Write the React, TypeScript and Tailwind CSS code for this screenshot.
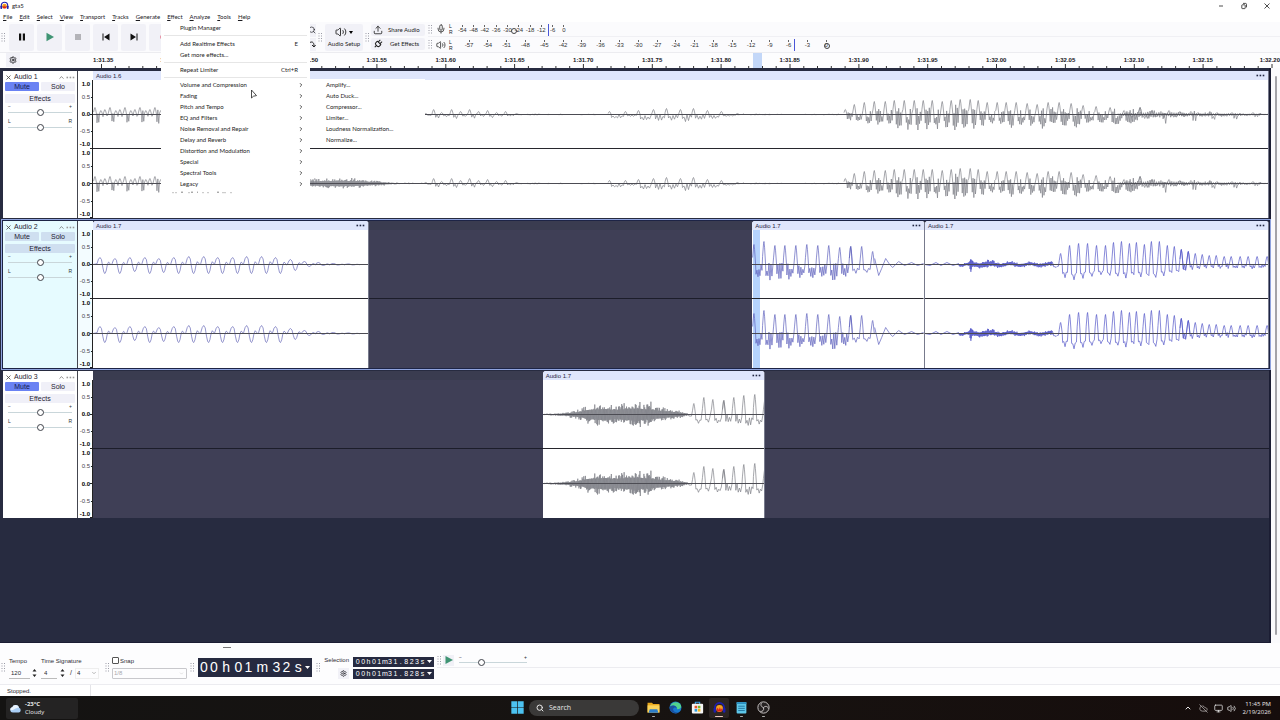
import React from "react";
import { ChevronDown, ChevronRight, ChevronUp, CloudOff, Mic, Monitor, Plug, Search, Settings, Upload, Volume2 } from "lucide-react";

type Point = [number, number];
type Pulse = [number, number, number];

function makeRandom(seed: number) {
  let s = seed;
  return () => {
    s = (s * 16807) % 2147483647;
    return s / 2147483647;
  };
}

/** A train of sharp peaks with a rough trough between each pair. */
function pulseTrain(pulses: Pulse[], rough: number, seed: number, step = 1.1): Point[] {
  const rnd = makeRandom(seed);
  const out: Point[] = [];
  pulses.forEach(([x, up, down], i) => {
    const next = pulses[i + 1];
    out.push([x - 1.4, up * 0.35], [x - 0.4, up * 0.92], [x, up], [x + 0.6, up * 0.75], [x + 1.6, 0]);
    if (!next) return;
    const start = x + 2;
    const end = next[0] - 1.8;
    let low = true;
    for (let p = start; p < end; p += step) {
      const t = (p - start) / (end - start);
      const base = -down * Math.pow(Math.sin(Math.PI * Math.min(0.93, t * 0.75 + 0.18)), 0.6);
      out.push([p, low ? base * (1.1 - 0.5 * rough * rnd()) : base * (1 - rough * (0.7 + 1.1 * rnd()))]);
      low = !low;
    }
  });
  return out;
}

/** Dense noise that follows an amplitude envelope, with a slow sway of its centre. */
function noise(envelope: Point[], seed: number, step = 0.5, sway = 0): Point[] {
  const rnd = makeRandom(seed);
  const out: Point[] = [];
  let flip = 1;
  for (let k = 0; k < envelope.length - 1; k++) {
    const [x0, a0] = envelope[k];
    const [x1, a1] = envelope[k + 1];
    for (let x = x0; x < x1; x += step) {
      const a = a0 + ((a1 - a0) * (x - x0)) / (x1 - x0);
      const r = rnd();
      out.push([x, flip * a * (0.5 + 0.6 * r * r * r) + sway * Math.sin(x / 3.2)]);
      flip = -flip;
    }
  }
  return out;
}

/** Soft rounded cycles: crest, trough and a small second bump. */
function softCycles(peaks: Pulse[]): Point[] {
  const out: Point[] = [];
  for (const [x, up, down] of peaks) {
    out.push([x - 3, up * 0.1], [x - 1.5, up * 0.75], [x, up], [x + 1.5, up * 0.7], [x + 2.8, -down * 0.3], [x + 4, -down * 0.9]);
    out.push([x + 5, -down], [x + 6.2, -down * 0.7], [x + 7.4, 0], [x + 8.6, up * 0.35], [x + 10, up * 0.15], [x + 11, -0.4]);
  }
  return out;
}

function toPath(points: Point[]) {
  return points.map(([x, y], i) => `${i ? "L" : "M"}${x.toFixed(1)} ${(-y).toFixed(1)}`).join("");
}

const introPulses: Pulse[] = [];
for (let i = 0; i < 15; i++) introPulses.push([2 + i * 15, 7, 11], [8 + i * 15, 4, 3], [12 + i * 15, 5, 3]);

const waveOne = [
  toPath(pulseTrain(introPulses, 0.9, 11, 0.9)),
  toPath(noise([[215, 4], [240, 5], [262, 5], [280, 3], [300, 1], [332, 0.6]], 5)),
  toPath(pulseTrain([[333, 1, 1], [341, 5, 4], [349, 2, 2], [359, 5, 4], [368, 3, 2], [377, 5, 4], [386, 3, 2], [395, 4, 3], [404, 2, 2], [413, 3, 2], [424, 1, 1]], 0.7, 8, 1.4)),
  toPath(noise([[424, 0.9], [450, 0.6], [514, 0.6]], 3)),
  toPath(pulseTrain([[517, 3, 4], [533, 3, 2], [546, 4, 6], [561, 5, 7], [574, 6, 6], [588, 5, 7], [601, 6, 6], [615, 4, 4], [629, 3, 2], [645, 1, 1]], 0.6, 9, 1.5)),
  toPath(noise([[645, 0.8], [700, 0.5], [751, 0.7]], 6)),
  toPath(
    pulseTrain(
      [
        [753, 5, 6], [762, 10, 8], [772, 12, 9], [782, 13, 10], [793, 13, 13], [802, 14, 14], [812, 14, 15], [822, 14, 15],
        [831, 14, 16], [840, 14, 14], [850, 13, 14], [859, 14, 16], [868, 15, 15], [878, 15, 13], [886, 14, 11], [895, 12, 10],
        [905, 12, 12], [914, 12, 13], [924, 12, 11], [935, 11, 12], [945, 10, 13], [956, 12, 12], [967, 12, 12], [979, 11, 12],
        [991, 9, 9], [1004, 8, 8], [1018, 7, 10], [1032, 4, 10], [1048, 7, 5],
      ],
      0.9,
      21,
      0.8,
    ),
  ),
  toPath(noise([[1026, 2], [1048, 3], [1060, 4], [1072, 3], [1092, 3], [1100, 2], [1118, 2], [1130, 1.5], [1150, 1.2], [1176, 1]], 57, 1.1)),
  toPath(pulseTrain([[1048, 7, 4], [1060, 4, 3], [1069, 3, 9], [1077, 4, 3], [1088, 3, 2], [1099, 3, 8], [1106, 2, 2], [1118, 3, 6], [1125, 2, 2], [1140, 2, 5], [1148, 1, 1], [1161, 2, 4], [1168, 1, 1]], 0.8, 77, 1.3)),
];

const waveTwoA = [
  toPath([
    [0, 0] as Point,
    ...softCycles([
      [7, 7, 9], [22, 6, 9], [37, 7, 7], [52, 7, 9], [66, 6, 8], [81, 7, 9], [96, 8, 9], [111, 8, 9], [125, 7, 9], [140, 7, 9],
      [154, 8, 9], [169, 8, 9], [183, 7, 9], [198, 5, 6], [212, 3, 2], [226, 2, 1], [241, 1, 0.5], [256, 0.6, 0.4],
    ]),
  ]),
];

const waveTwoB = [
  toPath(pulseTrain([[2, 20, 13], [12, 23, 15], [23, 19, 14], [33, 19, 15], [44, 19, 13], [55, 20, 14], [66, 19, 13], [77, 19, 15], [88, 17, 12], [99, 18, 8]], 0.65, 31, 1)),
  toPath(pulseTrain([[99, 18, 8], [110, 18, 8], [121, 13, 9]], 0.3, 4, 1.6)),
  toPath([[123, 6], [127, -11], [130, -4], [134, 6], [138, 0], [141, -3], [147, 3], [153, -1], [160, 2], [166, -1], [172, 1]]),
];

const waveTwoC = [
  toPath([[0, 0], [5, -1], [11, 2], [16, -1], [22, 2], [28, -1], [34, 1]]),
  toPath(noise([[34, 1.5], [44, 2], [46, 8], [48, 3], [60, 4], [75, 2.6], [95, 2.4], [110, 2], [128, 2.6]], 17, 0.4, 0.9)),
  toPath(
    pulseTrain(
      [[127, 3, 3], [136, 11, 13], [145, 19, 14], [154, 21, 13], [163, 21, 11], [172, 19, 10], [181, 19, 11], [189, 22, 12], [197, 23, 13], [205, 21, 12], [212, 22, 12], [220, 20, 13], [227, 23, 13], [235, 23, 11], [243, 19, 9], [250, 18, 8], [257, 15, 7], [264, 13, 6]],
      0.2,
      41,
      1.2,
    ),
  ),
  toPath(
    pulseTrain(
      [[257, 15, 6], [264, 13, 5], [271, 11, 5], [278, 10, 4], [285, 9, 4], [292, 9, 4], [300, 8, 4], [307, 8, 4], [316, 8, 4], [324, 8, 4], [333, 8, 4], [343, 8, 4]],
      0.7,
      43,
      1,
    ),
  ),
];

const waveThree = [
  toPath(noise([[0, 0.5], [20, 1.5], [38, 5], [45, 9], [62, 11], [72, 9], [84, 11], [95, 12], [104, 10], [106, 17], [109, 9], [120, 7], [135, 4], [145, 1]], 13, 0.4)),
  toPath(pulseTrain([[144, 1, 2], [151, 11, 8], [161, 17, 8], [170, 15, 8], [181, 14, 9]], 0.3, 23, 1.3)),
  toPath(pulseTrain([[181, 14, 9], [191, 17, 10], [201, 19, 12], [212, 20, 12], [222, 14, 8]], 0.65, 29, 1.2)),
];

function Waveform({ width, paths, stroke, selection }: { width: number; paths: string[]; stroke: string; selection?: boolean }) {
  return (
    <svg viewBox={`0 0 ${width} 138`} preserveAspectRatio="none" className="block h-[138px] w-full" aria-hidden="true">
      {selection && <rect x="1" y="0" width="7" height="138" fill="#b5d3fd" />}
      {[34.5, 103.5].map((cy) => (
        <g key={cy} transform={`translate(0 ${cy})`}>
          {paths.map((d, i) => (
            <path key={i} d={d} fill="none" stroke={stroke} strokeWidth="0.7" strokeLinejoin="round" vectorEffect="non-scaling-stroke" />
          ))}
          <path d={`M0 0H${width}`} stroke="#4b4b52" strokeWidth="1" />
        </g>
      ))}
      <path d={`M0 68.5H${width}`} stroke="#26262c" strokeWidth="1" />
    </svg>
  );
}

function Dots({ className }: { className: string }) {
  return (
    <svg viewBox="0 0 9 3" className={`h-[3px] w-[9px] ${className}`} fill="currentColor" aria-hidden="true">
      <rect x="0.5" y="0.7" width="1.6" height="1.6" />
      <rect x="3.6" y="0.7" width="1.6" height="1.6" />
      <rect x="6.7" y="0.7" width="1.6" height="1.6" />
    </svg>
  );
}

function Clip({ name, width, grow, paths, stroke, selection, square }: { name: string; width: number; grow: string; paths: string[]; stroke: string; selection?: boolean; square?: boolean }) {
  return (
    <section className={`${grow} flex min-w-0 basis-0 flex-col overflow-hidden border-r border-[#777a8c] bg-white ${square ? "" : "rounded-t-[3px]"}`}>
      <div className="flex h-[9px] shrink-0 items-center justify-between bg-[#dfe6fc] px-[3px] text-[6px] leading-[8px] text-[#1f2440]">
        <span className="whitespace-nowrap">{name}</span>
        <Dots className="text-[#1f2440]" />
      </div>
      <Waveform width={width} paths={paths} stroke={stroke} selection={selection} />
    </section>
  );
}

function Gap({ grow }: { grow: string }) {
  return (
    <div className={`${grow} flex basis-0 flex-col bg-[#3f3f56]`}>
      <div className="h-[9px] bg-[#3a3c50]" />
      <div className="h-[69px] border-b border-[#1c1d2a]" />
    </div>
  );
}

function ScaleChannel({ tall }: { tall?: boolean }) {
  return (
    <div className={`flex flex-col items-end text-[6px] leading-[8px] ${tall ? "h-[69px]" : "h-[68px]"}`}>
      <b>1.0</b>
      <div className="grow-[5]" />
      <span className="text-[#44444c]">0.5</span>
      <div className="grow-[9]" />
      <b>0.0</b>
      <div className="grow-[9]" />
      <span className="text-[#44444c]">-0.5</span>
      <div className="grow-[5]" />
      <b>-1.0</b>
    </div>
  );
}

function ScaleTicks() {
  return (
    <svg viewBox="0 0 3 138" className="mt-[9px] h-[138px] w-[3px] shrink-0 text-[#222]" fill="none" stroke="currentColor" aria-hidden="true">
      <path d="M1 17.5h2M0 34.5h3M1 51.5h2M0 68.5h3M1 86.5h2M0 103.5h3M1 121.5h2M0 137.5h3" />
      <path d="M2.5 0v138" />
    </svg>
  );
}

const rangeClass =
  "block h-[7px] w-full appearance-none bg-transparent bg-[linear-gradient(#c9d6da,#c9d6da)] bg-[length:100%_1px] bg-center bg-no-repeat [&::-webkit-slider-thumb]:h-[7px] [&::-webkit-slider-thumb]:w-[7px] [&::-webkit-slider-thumb]:appearance-none [&::-webkit-slider-thumb]:rounded-full [&::-webkit-slider-thumb]:border [&::-webkit-slider-thumb]:border-[#3d4048] [&::-webkit-slider-thumb]:bg-white";

function PanelSlider({ left, right, label }: { left: string; right: string; label: string }) {
  return (
    <label className="block px-[3px]">
      <span className="flex h-[5px] items-center justify-between text-[5px] leading-[5px] text-[#333]">
        <span>{left}</span>
        <span>{right}</span>
      </span>
      <input type="range" defaultValue={50} aria-label={label} className={rangeClass} />
    </label>
  );
}

function Track({ name, muted, focused, children }: { name: string; muted?: boolean; focused?: boolean; children: React.ReactNode }) {
  const button = focused ? "bg-[#cfdff0]" : "bg-[#f0f0f8]";
  return (
    <article className="pt-[3px]">
      <div className={`flex h-[147px] ${focused ? "relative shadow-[0_0_0_1px_#1d2445,0_0_0_2px_#8fa3de]" : ""}`}>
        <div className={`w-[75px] shrink-0 border-r border-[#44464f] px-[2px] pt-[2px] text-[7px] leading-[8px] text-[#1e2030] ${focused ? "bg-[#e6fbff]" : "bg-white"}`}>
          <header className="flex h-2 items-center">
            <button aria-label={`Close ${name}`} className="flex w-[8px] items-center">
              <svg viewBox="0 0 5 5" className="ml-px h-[5px] w-[5px]" stroke="#444" strokeWidth="0.8"><path d="M.5.5l4 4M4.5.5l-4 4" /></svg>
            </button>
            <h2 className="ml-px grow whitespace-nowrap">{name}</h2>
            <ChevronUp size={7} className="mr-px text-[#444]" />
            <Dots className="text-[#999]" />
          </header>
          <div className="mt-px flex gap-[2px]">
            <button className={`h-[9px] flex-1 rounded-[1px] ${muted ? "bg-[#6a82f3] text-[#151c50]" : button}`}>Mute</button>
            <button className={`h-[9px] flex-1 rounded-[1px] ${button}`}>Solo</button>
          </div>
          <button className={`mt-[3px] block h-[9px] w-full rounded-[1px] ${button}`}>Effects</button>
          <div className="flex flex-col gap-[3px] pt-px">
            <PanelSlider left="−" right="+" label={`${name} gain`} />
            <PanelSlider left="L" right="R" label={`${name} pan`} />
          </div>
        </div>
        <div className={`flex w-[15px] shrink-0 ${focused ? "bg-[#f3fcff]" : "bg-white"}`}>
          <div className="flex w-3 flex-col pt-[9px] text-black">
            <ScaleChannel />
            <div className="h-px" />
            <ScaleChannel tall />
          </div>
          <ScaleTicks />
        </div>
        <div className="flex min-w-0 grow">{children}</div>
      </div>
    </article>
  );
}

function Grip() {
  return (
    <svg viewBox="0 0 5 9" className="h-[9px] w-[5px] shrink-0" fill="#9a9ba6" aria-hidden="true">
      {[0.5, 3, 5.5, 8].map((y) => (
        <React.Fragment key={y}>
          <rect x="0.5" y={y - 0.5} width="1" height="1" />
          <rect x="3" y={y - 0.5} width="1" height="1" />
        </React.Fragment>
      ))}
    </svg>
  );
}

function AudacityLogo({ className }: { className: string }) {
  return (
    <svg viewBox="0 0 12 12" className={className} aria-hidden="true">
      <circle cx="6" cy="7" r="3.2" fill="#f4a020" />
      <path d="M3.4 7.6l1-1.4 1 2 .9-2.4 1 2.2 1-1.4.5 1-1 2H4z" fill="#d9201c" />
      <path d="M1.7 8V6a4.3 4.3 0 018.6 0v2" fill="none" stroke="#1c1fb0" strokeWidth="1.5" />
      <rect x="0.5" y="6.2" width="2.4" height="4.6" rx="1" fill="#1c1fb0" />
      <rect x="9.1" y="6.2" width="2.4" height="4.6" rx="1" fill="#1c1fb0" />
    </svg>
  );
}

const menus = ["File", "Edit", "Select", "View", "Transport", "Tracks", "Generate", "Effect", "Analyze", "Tools", "Help"];
const effectGroups = ["Volume and Compression", "Fading", "Pitch and Tempo", "EQ and Filters", "Noise Removal and Repair", "Delay and Reverb", "Distortion and Modulation", "Special", "Spectral Tools", "Legacy"];
const volumeEffects = ["Amplify...", "Auto Duck...", "Compressor...", "Limiter...", "Loudness Normalization...", "Normalize..."];

function EffectMenu() {
  const row = "flex h-[11px] w-full items-center justify-between pl-[19px] pr-3 text-left whitespace-nowrap";
  return (
    <div role="menu" className="absolute top-[22px] left-[161px] z-20 w-[149px] bg-white pb-1 font-[Lato,sans-serif] text-[6px] leading-[8px] text-[#1c1c1c]">
      <button role="menuitem" className={row}>Plugin Manager</button>
      <hr className="mx-[3px] my-[2px] border-[#e6e6e6]" />
      <button role="menuitem" className={row}>Add Realtime Effects<span>E</span></button>
      <button role="menuitem" className={row}>Get more effects...</button>
      <hr className="mx-[3px] mt-[2px] mb-px border-[#e6e6e6]" />
      <button role="menuitem" className={row}>Repeat Limiter<span>Ctrl+R</span></button>
      <hr className="mx-[3px] mt-[2px] mb-px border-[#e6e6e6]" />
      <div className="relative">
        {effectGroups.map((g) => (
          <button key={g} role="menuitem" className="flex h-[11px] w-full items-center justify-between pr-[6px] pl-[19px] text-left whitespace-nowrap">
            {g}
            <ChevronRight size={6} strokeWidth={3} />
          </button>
        ))}
        <div role="menu" className="absolute top-0 left-full w-[115px] bg-white">
          {volumeEffects.map((e) => (
            <button key={e} role="menuitem" className="flex h-[11px] w-full items-center pl-4 text-left whitespace-nowrap">{e}</button>
          ))}
        </div>
        <svg viewBox="0 0 8 11" className="absolute top-[10px] left-[89px] h-[11px] w-[8px]" aria-hidden="true">
          <path d="M1.5 1v8l2-1.8 3-.6z" fill="#fff" stroke="#222" strokeWidth="0.8" strokeLinejoin="round" />
        </svg>
      </div>
      <svg viewBox="0 0 70 3" className="mt-[2px] ml-[10px] block h-[3px] w-[70px]" stroke="#777" strokeWidth="0.9" aria-hidden="true">
        <path d="M2 1.2v1M5 1.2v1M10 1.2h2M18 1.2v1M20 1.2h2M26 1.2h1M32 1.2v1M37 1.2v1M46 1.2h2M52 1.2v1M54 1.2v1M60 1.2v1" />
      </svg>
    </div>
  );
}

function TransportButton({ label, children }: { label: string; children: React.ReactNode }) {
  return (
    <button aria-label={label} className="flex h-[27px] w-[25px] shrink-0 items-center justify-center rounded-[2px] bg-[#f1f1f7]">
      <svg viewBox="0 0 12 12" className="h-3 w-3">{children}</svg>
    </button>
  );
}

const recordMarks = ["-54", "-48", "-42", "-36", "-30", "-24", "-18", "-12", "-6", "0"];
const playMarks = ["-57", "-54", "-51", "-48", "-45", "-42", "-39", "-36", "-33", "-30", "-27", "-24", "-21", "-18", "-15", "-12", "-9", "-6", "-3", "0"];

function Meter({ marks, className, peak, knob }: { marks: string[]; className: string; peak: string; knob: string }) {
  return (
    <div className={`relative grid text-center text-[6px] leading-[7px] text-[#333] ${className}`}>
      {marks.map((m) => (
        <span key={m} className="flex flex-col items-center">
          <i className="h-[2px] w-px bg-[#666]" />
          {m}
        </span>
      ))}
      <i className={`absolute -top-px h-3 w-px bg-[#4a56d8] ${peak}`} />
      <i className={`absolute top-[3px] h-[6px] w-[6px] rounded-full border border-[#444] ${knob}`} />
    </div>
  );
}

function Toolbar() {
  return (
    <div className="flex h-[31px] items-center border-b border-[#ececf0] bg-[#fbfbfd] pl-px">
      <Grip />
      <div className="ml-[3px] flex w-[307px] gap-[3px] overflow-hidden">
        <TransportButton label="Pause"><path d="M3 2.5h2.2v7H3zM6.8 2.5H9v7H6.8z" fill="#111" /></TransportButton>
        <TransportButton label="Play"><path d="M2.5 1.8L10 6l-7.5 4.2z" fill="#3f9473" /></TransportButton>
        <TransportButton label="Stop"><path d="M3 3h6v6H3z" fill="#b3b3b8" /></TransportButton>
        <TransportButton label="Skip to start"><path d="M2.5 2.5h1v7h-1zM9.5 2.5v7L4 6z" fill="#111" /></TransportButton>
        <TransportButton label="Skip to end"><path d="M8.5 2.5h1v7h-1zM2.5 2.5v7L8 6z" fill="#111" /></TransportButton>
        <TransportButton label="Record"><circle cx="8" cy="6" r="3.5" fill="#d92848" /></TransportButton>
        <div className="ml-auto flex flex-col gap-px">
          <button aria-label="Zoom selection" className="flex h-[13px] w-[13px] items-center justify-end bg-[#f1f1f7]"><Search size={8} /></button>
          <button aria-label="Zoom toggle" className="flex h-[13px] w-[13px] items-center justify-end bg-[#f1f1f7]">
            <svg viewBox="0 0 8 8" className="h-2 w-2" fill="none" stroke="#222"><path d="M1 3c3-2 5-1 5 3M4 5l2 2 1.600-2" /></svg>
          </button>
        </div>
      </div>
      <div className="ml-[2px]"><Grip /></div>
      <button className="ml-[2px] flex h-[27px] w-[38px] flex-col items-center justify-center gap-[2px] rounded-[2px] bg-[#f1f1f7] font-[Lato,sans-serif] text-[6px] leading-[8px] whitespace-nowrap text-[#222]">
        <span className="flex items-center gap-[2px]">
          <Volume2 size={12} strokeWidth={1.8} />
          <svg viewBox="0 0 4 3" className="h-[3px] w-1"><path d="M0 0h4L2 3z" /></svg>
        </span>
        Audio Setup
      </button>
      <div className="ml-[2px]"><Grip /></div>
      <div className="ml-px flex flex-col gap-[2px] font-[Lato,sans-serif] text-[6px] leading-[8px] text-[#222]">
        <button className="flex h-3 w-[54px] items-center gap-[5px] rounded-[2px] bg-[#f1f1f7] pl-[2px] whitespace-nowrap"><Upload size={10} strokeWidth={2} />Share Audio</button>
        <button className="flex h-3 w-[54px] items-center gap-[7px] rounded-[2px] bg-[#f1f1f7] pl-[2px] whitespace-nowrap"><Plug size={10} strokeWidth={2.5} className="rotate-45" />Get Effects</button>
      </div>
      <div className="flex min-w-0 grow flex-col self-stretch pl-[3px]">
        <div className="flex h-[15px] items-center border-b border-[#f0f0f4]">
          <Grip />
          <Mic size={10} strokeWidth={2} className="ml-[3px] text-[#333]" />
          <span className="ml-[3px] text-[5px] leading-[6px]">L<br />R</span>
          <Meter marks={recordMarks} className="ml-[4px] w-[113px] grid-cols-10" peak="left-[81%]" knob="left-[48%]" />
        </div>
        <div className="flex h-[15px] items-center">
          <Grip />
          <Volume2 size={10} strokeWidth={2} className="ml-[3px] text-[#333]" />
          <span className="ml-[3px] text-[5px] leading-[6px]">L<br />R</span>
          <Meter marks={playMarks} className="ml-[7px] w-[376px] grid-cols-20" peak="left-[89%]" knob="left-[97%]" />
        </div>
      </div>
    </div>
  );
}

const rulerLabels = ["1:31.40", "", "1:31.50", "1:31.55", "1:31.60", "1:31.65", "1:31.70", "1:31.75", "1:31.80", "1:31.85", "1:31.90", "1:31.95", "1:32.00", "1:32.05", "1:32.10", "1:32.15"];

function Timeline() {
  let ticks = "";
  for (let i = 0; i < 87; i++) {
    const x = 8.5 + i * 13.77;
    ticks += `M${x.toFixed(1)} ${i % 5 ? 2 : 0}V4`;
  }
  return (
    <div className="flex h-[15px] bg-[#fdfdfe]">
      <div className="w-[93px] shrink-0 pl-[6px]">
        <button aria-label="Timeline options" className="flex h-[14px] w-[14px] items-center justify-center bg-[#f1f1f7]"><Settings size={8} strokeWidth={2.5} /></button>
      </div>
      <div className="relative flex min-w-0 grow flex-col">
        <div className="absolute inset-y-0 left-[55.6%] w-[0.75%] bg-[#c3d7f8]" />
        <div className="relative flex h-[13px] items-center overflow-hidden text-[6px] leading-[8px] font-bold whitespace-nowrap text-[#15151c]">
          <span className="grow-[43] basis-0">1:31.35</span>
          {rulerLabels.map((l, i) => (
            <span key={i} className="grow-[69] basis-0 text-center">{l}</span>
          ))}
          <span className="grow-[43] basis-0 text-right">1:32.20</span>
        </div>
        <svg viewBox="0 0 1187 4" preserveAspectRatio="none" className="absolute inset-x-0 bottom-0 block h-1 w-full" stroke="#333" strokeWidth="1" aria-hidden="true">
          <path d={ticks} />
        </svg>
      </div>
    </div>
  );
}

function TimeDigits({ value, cell }: { value: string; cell: string }) {
  return (
    <>
      {value.split("").map((c, i) => (
        <span key={i} className={`${cell} text-center`}>{c}</span>
      ))}
    </>
  );
}

function BigTime() {
  return (
    <div className="flex h-[19px] w-[114px] items-center justify-between bg-[#262a40] pr-[2px] pl-px text-[14px] leading-[19px] text-white">
      <span className="flex"><TimeDigits value="00" cell="w-[10px]" /></span>
      <span>h</span>
      <span className="flex"><TimeDigits value="01" cell="w-[10px]" /></span>
      <span>m</span>
      <span className="flex"><TimeDigits value="32" cell="w-[10px]" /></span>
      <span>s</span>
      <svg viewBox="0 0 5 3" className="h-[3px] w-[5px]" fill="#fff"><path d="M0 0h5L2.500 3z" /></svg>
    </div>
  );
}

function SmallTime({ value }: { value: string }) {
  return (
    <div className="flex h-[10px] w-[81px] items-center justify-between bg-[#262a40] px-[2px] text-[7px] leading-[10px] text-white">
      <TimeDigits value={value} cell="min-w-0 flex-1" />
      <svg viewBox="0 0 5 3" className="ml-[2px] h-[3px] w-[5px]" fill="#fff"><path d="M0 0h5L2.500 3z" /></svg>
    </div>
  );
}

function Spinner() {
  return (
    <svg viewBox="0 0 5 10" className="h-[10px] w-[5px] shrink-0" fill="#222" aria-hidden="true">
      <path d="M.5 3.500h4l-2-2.500zM.5 6.500h4l-2 2.500z" />
    </svg>
  );
}

function BottomBar() {
  return (
    <footer className="bg-[#fdfdfe] text-[6px] leading-[8px] text-[#2b2b33]">
      <div className="flex h-[10px] pt-[4px] pl-[223px]"><i className="h-px w-2 bg-[#777]" /></div>
      <div className="mb-[2px] flex h-[29px] pl-px">
        <div className="flex w-[104px] items-center gap-[3px]">
          <Grip />
          <div className="flex gap-[4px]">
            <label className="w-[28px]">
              Tempo
              <span className="mt-[3px] flex items-center gap-[2px]">
                <input defaultValue="120" className="h-[11px] w-[21px] border-b border-[#bbb] pl-[2px]" />
                <Spinner />
              </span>
            </label>
            <div>
              <span>Time Signature</span>
              <span className="mt-[3px] flex items-center gap-[3px]">
                <input aria-label="Beats" defaultValue="4" className="h-[11px] w-[16px] border-b border-[#bbb] pl-[3px]" />
                <Spinner />
                <span className="pl-[2px] text-[7px]">/</span>
                <span className="relative flex h-[11px] w-[24px] items-center border border-[#eee]">
                  <select aria-label="Beat unit" className="w-full appearance-none bg-transparent pl-px"><option>4</option></select>
                  <ChevronDown size={6} className="pointer-events-none absolute right-px text-[#777]" />
                </span>
              </span>
            </div>
          </div>
        </div>
        <div className="flex w-[85px] items-center gap-[2px]">
          <Grip />
          <div>
            <label className="flex items-center gap-px"><input type="checkbox" className="h-[7px] w-[7px] appearance-none rounded-[1px] border border-[#555] bg-white" />Snap</label>
            <span className="relative mt-[3px] flex h-[11px] w-[75px] items-center rounded-[1px] border border-[#c8c8cc]">
              <select aria-label="Snap value" disabled className="w-full appearance-none bg-transparent pl-px text-[#a9a9ae]"><option>1/8</option></select>
              <ChevronDown size={5} className="pointer-events-none absolute right-[2px] text-[#bbb]" />
            </span>
          </div>
        </div>
        <div className="flex items-center gap-[3px]">
          <Grip />
          <BigTime />
        </div>
        <div className="ml-[4px] flex items-center gap-[3px]">
          <Grip />
          <div className="flex w-[25px] flex-col items-end gap-[4px] whitespace-nowrap">
            <span>Selection</span>
            <button aria-label="Selection options" className="flex h-[11px] w-[11px] items-center justify-center bg-[#f1f1f7]"><Settings size={7} strokeWidth={2.5} /></button>
          </div>
          <div className="flex flex-col gap-[2px] pl-px">
            <SmallTime value="00h01m31.823s" />
            <SmallTime value="00h01m31.828s" />
          </div>
        </div>
        <div className="flex grow flex-col pl-[3px]">
          <div className="flex h-[15px] items-center border-b border-[#ececf0]">
            <Grip />
            <button aria-label="Play at speed" className="ml-px flex h-[11px] w-[11px] items-center justify-center bg-[#f1f1f7]">
              <svg viewBox="0 0 8 8" className="h-2 w-2" fill="#3f9473"><path d="M.5 0L8 4 .5 8z" /></svg>
            </button>
            <label className="ml-[5px] block w-[68px]">
              <span className="flex h-[4px] items-center justify-between text-[5px] leading-[4px]"><span>−</span><span>+</span></span>
              <input type="range" aria-label="Playback speed" defaultValue={31} className={rangeClass} />
            </label>
          </div>
        </div>
      </div>
      <div className="flex h-3 border-t border-[#ececf0] bg-white">
        <output className="w-[91px] border-r border-[#e4e4e8] pt-[2px] pl-[7px]">Stopped.</output>
      </div>
    </footer>
  );
}

function TaskIcon({ label, active, running, children }: { label: string; active?: boolean; running?: boolean; children: React.ReactNode }) {
  return (
    <button aria-label={label} className={`flex h-5 w-5 flex-col items-center rounded-[2px] pt-[3px] ${active ? "bg-[#2c2523]" : ""}`}>
      <svg viewBox="0 0 12 12" className="h-[13px] w-[13px]">{children}</svg>
      {running && <i className={`mt-[2px] h-px rounded-full ${active ? "w-2 bg-[#e8c9bd]" : "w-[3px] bg-[#aaa]"}`} />}
    </button>
  );
}

function Taskbar() {
  return (
    <nav className="grid h-6 grid-cols-[1fr_auto_1fr] items-center bg-linear-to-r from-[#141312] via-[#171311] to-[#160d0c] font-['Open_Sans',sans-serif] text-[6px] leading-[8px] text-[#e8e8e8]">
      <button className="ml-[6px] flex h-[21px] w-[72px] items-center gap-[3px] rounded-[2px] bg-[#242323] pl-[3px] text-left">
        <svg viewBox="0 0 14 10" className="h-[9px] w-[13px]"><path d="M4 9.500a3 3 0 01-.6-5.900A4 4 0 0111 4.300a2.700 2.700 0 01-.5 5.200z" fill="#a9cdf5" /><path d="M3.400 3.600A4 4 0 0111 4.300C8 3 6 7 1.500 7c-.8-1.500.4-3.200 1.900-3.400z" fill="#e8f2fd" /></svg>
        <span><b>-23°C</b><br />Cloudy</span>
      </button>
      <div className="flex items-center gap-[2px]">
        <TaskIcon label="Start"><path d="M.3.3h5.400v5.400H.3zM6.300.3h5.400v5.400H6.300zM.3 6.300h5.400v5.400H.3zM6.300 6.300h5.400v5.400H6.300z" fill="#4cc2f0" /></TaskIcon>
        <button className="mr-[2px] flex h-4 w-[110px] items-center gap-[5px] rounded-full bg-[#3a3938] pl-[7px] text-[7px]"><Search size={8} strokeWidth={3} />Search</button>
        <TaskIcon label="File Explorer" running><path d="M.5 1.500h4l1.200 1.200h5.800v8H.5z" fill="#e9a91d" /><path d="M.5 4h11v6.700H.5z" fill="#fbd35a" /><path d="M2.500 7.500h7l1 3.300h-9z" fill="#2d7dc8" /></TaskIcon>
        <TaskIcon label="Edge"><circle cx="6" cy="6" r="5.500" fill="#1779cf" /><path d="M1 5C2 1 9-.5 11 4c1 3-2 4-3.500 3.600C8 5 4 3 1 5z" fill="#52d28b" /><path d="M1 5c3-2 6-.5 6 1.500-1-1.200-4-.5-3 2 .8 2 4 2.600 5.500 1.600C7 12.500.5 11 .5 6z" fill="#1b4f9e" /></TaskIcon>
        <TaskIcon label="Store"><path d="M4 3V1.200h4V3" fill="none" stroke="#3aa0e8" /><rect x="0.800" y="2.500" width="10.400" height="9" rx="1" fill="#f4f4f4" /><path d="M3.300 4.400h2.400v2.400H3.300z" fill="#e8532b" /><path d="M6.300 4.400h2.400v2.400H6.300z" fill="#7bb929" /><path d="M3.300 7.400h2.400v2.400H3.300z" fill="#2b9de0" /><path d="M6.300 7.400h2.400v2.400H6.300z" fill="#f5b81c" /></TaskIcon>
        <TaskIcon label="Audacity" active running><AudacityLogo className="h-3 w-3" /></TaskIcon>
        <TaskIcon label="Notepad" running><rect x="1.500" y="1" width="9" height="10.500" rx="0.800" fill="#5fc8ea" /><path d="M1.500 1h9v1.800h-9z" fill="#2b8fbf" /><path d="M3 4.800h6M3 6.800h6M3 8.800h6" stroke="#1d6d98" strokeWidth="0.800" /></TaskIcon>
        <TaskIcon label="OBS" running><circle cx="6" cy="6" r="5.200" fill="#262222" stroke="#c9c4c4" strokeWidth="0.900" /><path d="M6 6C3.500 5.500 3 3 4.500 1.800M6 6c1.800-1.800 4.300-1 4.500 1M6 6c.8 2.500-1 4-2.900 3.600" fill="none" stroke="#c9c4c4" strokeWidth="0.900" /></TaskIcon>
      </div>
      <div className="flex items-center justify-end pr-[9px]">
        <ChevronUp size={8} strokeWidth={3} />
        <CloudOff size={9} strokeWidth={2} className="ml-[7px] text-[#b5b0b0]" />
        <Monitor size={9} strokeWidth={2} className="ml-[6px]" />
        <Volume2 size={9} strokeWidth={2} className="ml-[4px]" />
        <time className="ml-[7px] text-right whitespace-nowrap">11:45 PM<br />2/19/2026</time>
      </div>
    </nav>
  );
}

export default function App() {
  return (
    <div className="relative flex min-h-screen flex-col bg-white font-['Liberation_Sans',sans-serif] text-[#1a1a1f]">
      <header className="font-[Lato,sans-serif] text-[6px] leading-[8px]">
        <div className="flex h-[11px] items-center pr-[9px]">
          <AudacityLogo className="h-[9px] w-[9px]" />
          <h1 className="ml-[3px] grow">gta5</h1>
          <div className="flex items-center gap-[15px]">
            <button aria-label="Minimize"><svg viewBox="0 0 8 8" className="h-2 w-2" stroke="#222" strokeWidth="0.800"><path d="M2 4h4" /></svg></button>
            <button aria-label="Restore"><svg viewBox="0 0 8 8" className="h-2 w-2" fill="none" stroke="#222" strokeWidth="0.800"><rect x="1.800" y="2.800" width="3.400" height="3.800" rx="0.500" /><path d="M3 1.400h2.500q1 0 1 1v3" /></svg></button>
            <button aria-label="Close"><svg viewBox="0 0 8 8" className="h-2 w-2" stroke="#222" strokeWidth="0.800"><path d="M1.500 1.500l5 5M6.500 1.500l-5 5" /></svg></button>
          </div>
        </div>
        <div role="menubar" className="flex h-[11px] items-center gap-[7px] pl-[3px]">
          {menus.map((m) => (
            <button key={m} role="menuitem"><span className="underline decoration-1">{m[0]}</span>{m.slice(1)}</button>
          ))}
        </div>
      </header>
      <EffectMenu />
      <Toolbar />
      <Timeline />
      <main className="flex grow bg-[#fafafc]">
        <div className="min-w-0 grow border-r-2 border-b border-[#1b1d33] bg-[#272b40] pl-[3px]">
          <Track name="Audio 1" muted>
            <Clip name="Audio 1.6" width={1176} grow="grow" paths={waveOne} stroke="#7f8188" square />
          </Track>
          <Track name="Audio 2" focused>
            <Clip name="Audio 1.7" width={276} grow="grow-[276]" paths={waveTwoA} stroke="#6769b8" />
            <Gap grow="grow-[384]" />
            <Clip name="Audio 1.7" width={172} grow="grow-[172]" paths={waveTwoB} stroke="#5f61bd" selection />
            <Clip name="Audio 1.7" width={344} grow="grow-[344]" paths={waveTwoC} stroke="#5557c8" />
          </Track>
          <Track name="Audio 3" muted>
            <Gap grow="grow-[450]" />
            <Clip name="Audio 1.7" width={222} grow="grow-[222]" paths={waveThree} stroke="#7f8188" />
            <Gap grow="grow-[504]" />
          </Track>
        </div>
        <div className="w-[9px] shrink-0 pt-2 pb-2 pl-[4px]"><div className="h-full w-[2px] rounded-full bg-[#a3a3a8]" /></div>
      </main>
      <BottomBar />
      <Taskbar />
    </div>
  );
}
